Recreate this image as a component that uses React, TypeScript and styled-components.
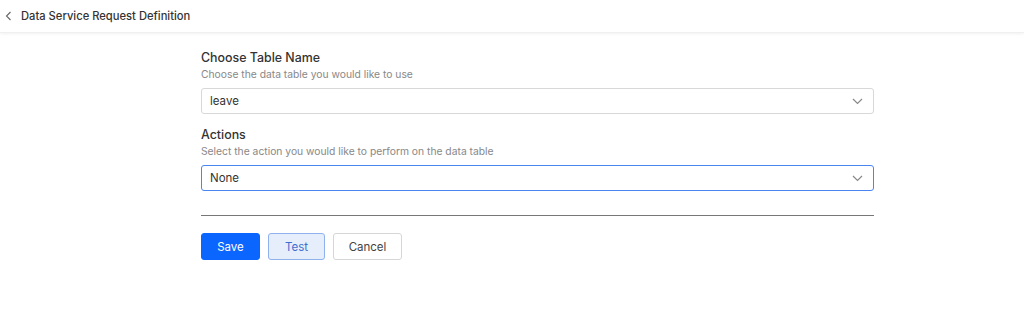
import React from 'react';
import styled, { createGlobalStyle } from 'styled-components';

const GlobalStyle = createGlobalStyle`
  body {
    margin: 0;
    background: #fff;
    font-family: Inter, "Noto Sans", sans-serif;
  }
`;

const Header = styled.div`
  height: 32px;
  display: flex;
  align-items: center;
  gap: 9px;
  padding-left: 5px;
  box-shadow: 0 1px 3px rgba(0, 0, 0, 0.06);
  border-bottom: 1px solid #f0f0f0;
  color: #333;
  font-size: 11.2px;
  font-weight: 500;
`;

const BackIcon = styled.svg`
  width: 7px;
  height: 10px;
  color: #666;
`;

const Form = styled.div`
  width: 673px;
  margin: 17px 0 0 201px;
  display: flex;
  flex-direction: column;
`;

const Field = styled.div`
  display: flex;
  flex-direction: column;
  margin-bottom: 13px;
`;

const Label = styled.div`
  font-size: 12.4px;
  font-weight: 500;
  color: #333;
  line-height: 16px;
`;

const Hint = styled.div`
  font-size: 10.3px;
  color: #888;
  line-height: 13px;
  margin: 2px 0 7px;
`;

const Select = styled.div<{ $focused?: boolean }>`
  height: 26px;
  box-sizing: border-box;
  border: 1px solid ${p => (p.$focused ? '#4a86f0' : '#d8d8d8')};
  border-radius: 3px;
  display: flex;
  align-items: center;
  justify-content: space-between;
  padding: 0 10px 0 8px;
  font-size: 11.5px;
  color: #333;
`;

const Chevron = styled.svg`
  width: 11px;
  height: 7px;
  color: #888;
`;

const Divider = styled.div`
  height: 1px;
  background: #777;
  margin-top: 11px;
`;

const Buttons = styled.div`
  display: flex;
  gap: 8px;
  margin-top: 17px;
`;

const Button = styled.button<{ $variant: 'primary' | 'soft' | 'plain'; $w: number }>`
  height: 27px;
  width: ${p => p.$w}px;
  border-radius: 3px;
  font-family: Inter, "Noto Sans", sans-serif;
  font-size: 11.5px;
  cursor: pointer;
  border: 1px solid
    ${p => (p.$variant === 'primary' ? '#0a66ff' : p.$variant === 'soft' ? '#8fb2ee' : '#d6d6d6')};
  background: ${p => (p.$variant === 'primary' ? '#0a66ff' : p.$variant === 'soft' ? '#e6eefc' : '#fff')};
  color: ${p => (p.$variant === 'primary' ? '#fff' : p.$variant === 'soft' ? '#3e6fd0' : '#444')};
`;

const ChevronDown = () => (
  <Chevron viewBox="0 0 11 7" fill="none">
    <path d="M1 1l4.5 4.5L10 1" stroke="currentColor" strokeWidth="1.2" />
  </Chevron>
);

const App = () => {
  return (
    <>
      <GlobalStyle />
      <Header>
        <BackIcon viewBox="0 0 7 10" fill="none">
          <path d="M5.5 1L1.5 5l4 4" stroke="currentColor" strokeWidth="1.1" />
        </BackIcon>
        Data Service Request Definition
      </Header>
      <Form>
        <Field>
          <Label>Choose Table Name</Label>
          <Hint>Choose the data table you would like to use</Hint>
          <Select>
            leave
            <ChevronDown />
          </Select>
        </Field>
        <Field>
          <Label>Actions</Label>
          <Hint>Select the action you would like to perform on the data table</Hint>
          <Select $focused>
            None
            <ChevronDown />
          </Select>
        </Field>
        <Divider />
        <Buttons>
          <Button $variant="primary" $w={59}>Save</Button>
          <Button $variant="soft" $w={57}>Test</Button>
          <Button $variant="plain" $w={69}>Cancel</Button>
        </Buttons>
      </Form>
    </>
  );
};

export default App;
